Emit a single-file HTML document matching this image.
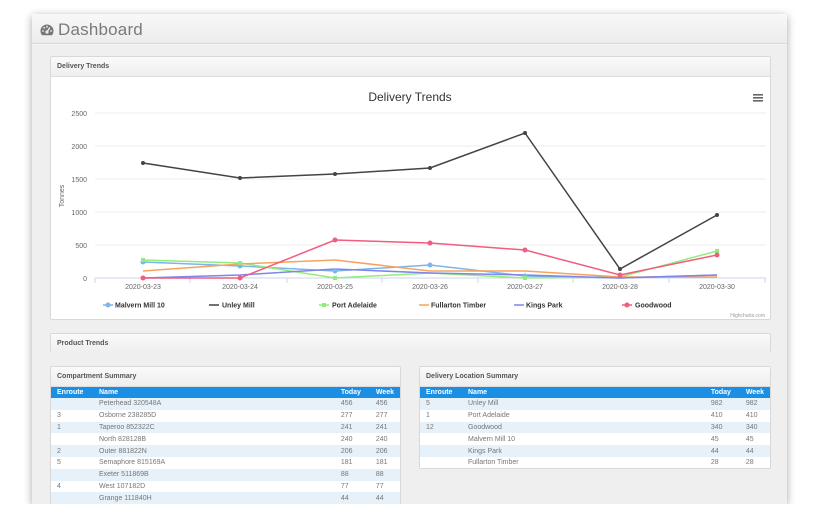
<!DOCTYPE html>
<html><head><style>
*{margin:0;padding:0;box-sizing:border-box}
body{width:820px;height:519px;background:#fff;font-family:"Liberation Sans",sans-serif;position:relative;overflow:hidden}
.outer{position:absolute;left:32px;top:14px;width:755px;height:490px;background:#efefef;box-shadow:0 2px 8px rgba(0,0,0,.35)}
.hdr{height:30px;background:linear-gradient(#f8f8f8,#ececec);border-bottom:1px solid #d8d8d8;box-shadow:0 1px 0 #f6f6f6;font-size:17px;color:#7a7a7a;padding:6px 0 0 8px;letter-spacing:0.2px}
.hdr svg{vertical-align:-1px;margin-right:4px}
.box{position:absolute;background:#fff;border:1px solid #d8d8d8;border-radius:2px}
.bh{height:20px;background:linear-gradient(#fafafa,#eee);border-bottom:1px solid #ddd;font-size:7px;font-weight:bold;color:#555;padding:6px 0 0 6px}
table{width:100%;border-collapse:collapse;font-size:7px;color:#777}
th{background:#1a8fe3;color:#fff;text-align:left;height:11px;padding:0 6px;font-weight:bold}
td{height:11.8px;padding:0 6px}
tr:nth-child(even) td{background:#e6f1fa}
</style></head><body>
<div class="outer">
<div class="hdr"><svg width="14" height="12" viewBox="0 0 14 12"><path d="M7 0.5A6.5 6.5 0 0 0 0.5 7c0 1.6 0.6 3.1 1.6 4.3h9.8A6.5 6.5 0 0 0 13.5 7 6.5 6.5 0 0 0 7 0.5z" fill="#777"/><circle cx="7" cy="8" r="1.6" fill="#eee"/><path d="M7 8L9.8 3.5" stroke="#eee" stroke-width="1.3"/><circle cx="3" cy="7" r="0.9" fill="#eee"/><circle cx="4.2" cy="3.8" r="0.9" fill="#eee"/><circle cx="7" cy="2.7" r="0.9" fill="#eee"/><circle cx="11" cy="7" r="0.9" fill="#eee"/></svg>Dashboard</div>
</div>
<div class="box" style="left:50px;top:56px;width:721px;height:264px">
<div class="bh">Delivery Trends</div>
<svg width="721" height="243" style="position:absolute;left:-1px;top:20px" font-family="Liberation Sans,sans-serif">
<g transform="translate(-50,-76)">
<text x="410" y="100" font-size="12" fill="#333" text-anchor="middle">Delivery Trends</text>
<g fill="#666"><rect x="753" y="93" width="10" height="1.6"/><rect x="753" y="96" width="10" height="1.6"/><rect x="753" y="99" width="10" height="1.6"/></g>
<g stroke="#eee" stroke-width="1"><line x1="95" x2="766" y1="112" y2="112"/><line x1="95" x2="766" y1="145" y2="145"/><line x1="95" x2="766" y1="178" y2="178"/><line x1="95" x2="766" y1="211" y2="211"/><line x1="95" x2="766" y1="244" y2="244"/></g>
<line x1="95" x2="766" y1="277" y2="277" stroke="#ccd6eb"/>
<g stroke="#ccd6eb"><line x1="95" x2="95" y1="277" y2="282"/><line x1="190" x2="190" y1="277" y2="282"/><line x1="287" x2="287" y1="277" y2="282"/><line x1="382" x2="382" y1="277" y2="282"/><line x1="478" x2="478" y1="277" y2="282"/><line x1="573" x2="573" y1="277" y2="282"/><line x1="669" x2="669" y1="277" y2="282"/><line x1="765" x2="765" y1="277" y2="282"/></g>
<g font-size="7" fill="#666" text-anchor="end"><text x="87" y="115">2500</text><text x="87" y="148">2000</text><text x="87" y="181">1500</text><text x="87" y="214">1000</text><text x="87" y="247">500</text><text x="87" y="280">0</text></g>
<text transform="translate(64,195) rotate(-90)" font-size="7" fill="#666" text-anchor="middle">Tonnes</text>
<g font-size="7" fill="#666" text-anchor="middle"><text x="143" y="288">2020-03-23</text><text x="240" y="288">2020-03-24</text><text x="335" y="288">2020-03-25</text><text x="430" y="288">2020-03-26</text><text x="525" y="288">2020-03-27</text><text x="620" y="288">2020-03-28</text><text x="717" y="288">2020-03-30</text></g>
<g fill="none" stroke-width="1.5">
<polyline stroke="#7cb5ec" points="143,261 240,265 335,270 430,264 525,275 620,277 717,274"/>
<polyline stroke="#90ed7d" points="143,259 240,262 335,277 430,272 525,277 620,276 717,250"/>
<polyline stroke="#f7a35c" points="143,270 240,263 335,259 430,270 525,270 620,276 717,276"/>
<polyline stroke="#8085e9" points="143,277 240,274 335,268 430,272 525,274 620,277 717,274"/>
<polyline stroke="#f15c80" points="143,277 240,277 335,239 430,242 525,249 620,274 717,254"/>
<polyline stroke="#434348" points="143,162 240,177 335,173 430,167 525,132 620,268 717,214"/>
</g>
<g fill="#7cb5ec"><circle cx="143" cy="261" r="2.5"/><circle cx="240" cy="265" r="2.5"/><circle cx="335" cy="270" r="2.5"/><circle cx="430" cy="264" r="2.5"/><circle cx="525" cy="275" r="2.5"/></g>
<g fill="#90ed7d"><rect x="141" y="257" width="4" height="4"/><rect x="238" y="260" width="4" height="4"/><rect x="333" y="275" width="4" height="4"/><rect x="523" y="275" width="4" height="4"/><rect x="715" y="248" width="4" height="4"/></g>
<g fill="#f15c80"><circle cx="143" cy="277" r="2.5"/><circle cx="240" cy="277" r="2.5"/><circle cx="335" cy="239" r="2.5"/><circle cx="430" cy="242" r="2.5"/><circle cx="525" cy="249" r="2.5"/><circle cx="620" cy="274" r="2.5"/><circle cx="717" cy="254" r="2.5"/></g>
<g fill="#434348"><circle cx="143" cy="162" r="2"/><circle cx="240" cy="177" r="2"/><circle cx="335" cy="173" r="2"/><circle cx="430" cy="167" r="2"/><circle cx="525" cy="132" r="2"/><circle cx="620" cy="268" r="2"/><circle cx="717" cy="214" r="2"/></g>
<g font-size="7" font-weight="bold" fill="#333">
<line x1="103" x2="113" y1="304" y2="304" stroke="#7cb5ec" stroke-width="1.5"/><circle cx="108" cy="304" r="2.5" fill="#7cb5ec"/><text x="115" y="306.5">Malvern Mill 10</text>
<line x1="209" x2="219" y1="304" y2="304" stroke="#434348" stroke-width="1.5"/><text x="222" y="306.5">Unley Mill</text>
<line x1="319" x2="329" y1="304" y2="304" stroke="#90ed7d" stroke-width="1.5"/><rect x="322" y="302" width="4" height="4" fill="#90ed7d"/><text x="332" y="306.5">Port Adelaide</text>
<line x1="419" x2="429" y1="304" y2="304" stroke="#f7a35c" stroke-width="1.5"/><text x="431" y="306.5">Fullarton Timber</text>
<line x1="514" x2="524" y1="304" y2="304" stroke="#8085e9" stroke-width="1.5"/><text x="526" y="306.5">Kings Park</text>
<line x1="622" x2="632" y1="304" y2="304" stroke="#f15c80" stroke-width="1.5"/><circle cx="627" cy="304" r="2.5" fill="#f15c80"/><text x="635" y="306.5">Goodwood</text>
</g>
<text x="765" y="316" font-size="5" fill="#999" text-anchor="end">Highcharts.com</text>
</g></svg>
</div>
<div class="box" style="left:50px;top:333px;width:721px;height:20px"><div class="bh" style="border:0">Product Trends</div></div>
<div class="box" style="left:50px;top:366px;width:351px;height:140px;overflow:hidden">
<div class="bh">Compartment Summary</div>
<table><tr><th style="width:42px">Enroute</th><th>Name</th><th style="width:35px">Today</th><th style="width:28px">Week</th></tr>
<tr><td></td><td>Peterhead 320548A</td><td>456</td><td>456</td></tr>
<tr><td>3</td><td>Osborne 238285D</td><td>277</td><td>277</td></tr>
<tr><td>1</td><td>Taperoo 852322C</td><td>241</td><td>241</td></tr>
<tr><td></td><td>North 828128B</td><td>240</td><td>240</td></tr>
<tr><td>2</td><td>Outer 881822N</td><td>206</td><td>206</td></tr>
<tr><td>5</td><td>Semaphore 815169A</td><td>181</td><td>181</td></tr>
<tr><td></td><td>Exeter 511869B</td><td>88</td><td>88</td></tr>
<tr><td>4</td><td>West 107182D</td><td>77</td><td>77</td></tr>
<tr><td></td><td>Grange 111840H</td><td>44</td><td>44</td></tr>
</table></div>
<div class="box" style="left:419px;top:366px;width:352px;height:103px">
<div class="bh">Delivery Location Summary</div>
<table><tr><th style="width:42px">Enroute</th><th>Name</th><th style="width:35px">Today</th><th style="width:28px">Week</th></tr>
<tr><td>5</td><td>Unley Mill</td><td>982</td><td>982</td></tr>
<tr><td>1</td><td>Port Adelaide</td><td>410</td><td>410</td></tr>
<tr><td>12</td><td>Goodwood</td><td>340</td><td>340</td></tr>
<tr><td></td><td>Malvern Mill 10</td><td>45</td><td>45</td></tr>
<tr><td></td><td>Kings Park</td><td>44</td><td>44</td></tr>
<tr><td></td><td>Fullarton Timber</td><td>28</td><td>28</td></tr>
</table></div>
<div style="position:absolute;left:0;top:504px;width:820px;height:15px;background:#fff"></div>
</body></html>
